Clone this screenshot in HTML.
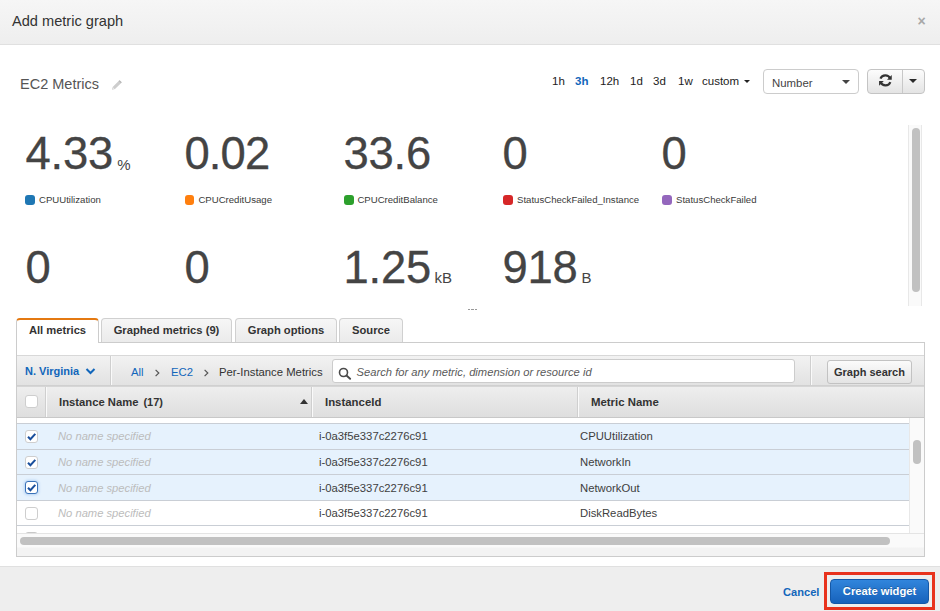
<!DOCTYPE html>
<html>
<head>
<meta charset="utf-8">
<title>Add metric graph</title>
<style>
html,body{margin:0;padding:0;}
body{width:940px;height:611px;overflow:hidden;background:#fff;font-family:"Liberation Sans",sans-serif;color:#444;position:relative;}
.abs{position:absolute;white-space:nowrap;}
#hdr{left:0;top:0;width:940px;height:44px;background:linear-gradient(#f6f6f6,#eeeeee);border-bottom:1px solid #e0e0e0;}
#title{left:12px;top:12px;font-size:14.6px;line-height:18px;color:#333;}
#close{left:917.5px;top:11.5px;font-size:14px;line-height:18px;color:#a8a8a8;font-weight:bold;}
#wtitle{left:20px;top:75px;font-size:14.5px;line-height:18px;color:#555;}
.tr{top:74px;font-size:11.5px;line-height:14px;color:#222;}
.big{font-size:45.4px;line-height:48px;color:#444;letter-spacing:-0.2px;-webkit-text-stroke:0.3px #444;}
.unit{font-size:15px;line-height:16px;color:#444;}
.sw{width:9.6px;height:9.6px;border-radius:3px;}
.lg{font-size:9.6px;line-height:12px;color:#3a3a3a;}

.tab{top:318px;height:24px;box-sizing:border-box;border:1px solid #d0d0d0;border-bottom:none;border-radius:4px 4px 0 0;background:linear-gradient(#f6f6f6,#ebebeb);font-size:11.2px;font-weight:bold;color:#333;line-height:14px;text-align:center;padding-top:4px;}
#tab1{left:16px;width:83px;height:25px;background:#fff;border-color:#ccc;border-top:2px solid #e47911;padding-top:3px;z-index:3;}
#panel{left:16px;top:342px;width:909px;height:215px;box-sizing:border-box;border:1px solid #ccc;background:#fff;}
#toolbar{left:17px;top:355px;width:907px;height:31px;background:linear-gradient(#f2f2f2,#e2e2e2);border-top:1px solid #d8d8d8;border-bottom:1px solid #d0d0d0;box-sizing:border-box;}
.vdiv{width:1px;background:#cfcfcf;border-right:1px solid #fafafa;}
.bc{top:365px;font-size:11.3px;line-height:14px;color:#333;}
.bc.l{color:#1166bb;}
#thead{left:17px;top:386px;width:907px;height:32px;background:linear-gradient(#eeeeee,#dedede);border-bottom:1px solid #c8c8c8;border-top:1px solid #d6d6d6;box-sizing:border-box;}
.th{top:395px;font-size:11.4px;font-weight:bold;line-height:14px;color:#333;}
.row{left:17px;width:892px;box-sizing:border-box;border-top:1px solid #c9ced5;}
.row.sel{background:#e6f2fd;}
.cb{left:25px;width:13px;height:13px;box-sizing:border-box;border:1px solid #cecece;border-radius:3px;background:#fff;}
.nn{left:58px;font-size:11.2px;font-style:italic;color:#bcbcbc;line-height:14px;}
.td{font-size:11.3px;color:#404040;line-height:14px;}
#footer{left:0;top:566px;width:940px;height:45px;background:#eeeeee;border-top:1px solid #e0e0e0;}
</style>
</head>
<body>
<!-- header -->
<div class="abs" id="hdr"></div>
<div class="abs" id="title">Add metric graph</div>
<div class="abs" id="close">×</div>

<!-- widget title -->
<div class="abs" id="wtitle">EC2 Metrics</div>
<svg class="abs" style="left:111px;top:79px" width="12" height="12" viewBox="0 0 12 12"><path d="M1 10.8 L1.7 7.9 L7.9 1.7 Q8.5 1.1 9.1 1.7 L10.2 2.8 Q10.8 3.4 10.2 4 L4 10.1 Z" fill="#cdcdcd"/><path d="M8.3 1.4 Q8.7 1.1 9.1 1.7 L10.2 2.8 Q10.8 3.4 10.5 3.7 L9.9 4.3 L7.7 2 Z" fill="#b8b8b8"/><path d="M2 9.9 L2.4 8.6 L3.4 9.5 Z" fill="#f2f2f2"/></svg>

<!-- time range -->
<div class="abs tr" style="left:552px">1h</div>
<div class="abs tr" style="left:575px;color:#1166bb;font-weight:bold">3h</div>
<div class="abs tr" style="left:600px">12h</div>
<div class="abs tr" style="left:630px">1d</div>
<div class="abs tr" style="left:653px">3d</div>
<div class="abs tr" style="left:678px">1w</div>
<div class="abs tr" style="left:702px">custom</div>
<div class="abs" style="left:744.3px;top:80.2px;width:0;height:0;border-left:3.2px solid transparent;border-right:3.2px solid transparent;border-top:3.1px solid #222"></div>

<!-- Number select -->
<div class="abs" style="left:763px;top:69px;width:94px;height:23px;border:1px solid #ccc;border-radius:4px;background:#fff"></div>
<div class="abs" style="left:772px;top:76px;font-size:11.4px;line-height:14px;color:#444">Number</div>
<div class="abs" style="left:842px;top:80px;width:0;height:0;border-left:4px solid transparent;border-right:4px solid transparent;border-top:4px solid #444"></div>

<!-- refresh group -->
<div class="abs" style="left:867px;top:69px;width:56px;height:23px;border:1px solid #c4c4c4;border-radius:4px;background:linear-gradient(#fcfcfc,#e4e4e4)"></div>
<div class="abs" style="left:902px;top:70px;width:1px;height:23px;background:#c8c8c8"></div>
<svg class="abs" style="left:877.6px;top:73px" width="14.8" height="14.8" viewBox="0 0 14 14"><g fill="none" stroke="#333" stroke-width="2"><path d="M11.5 5.2 A5 5 0 0 0 2.3 5.4"/><path d="M2.5 8.8 A5 5 0 0 0 11.7 8.6"/></g><path d="M13 2 L13 6.5 L8.5 6.5 Z" fill="#333"/><path d="M1 12 L1 7.5 L5.5 7.5 Z" fill="#333"/></svg>
<div class="abs" style="left:909.3px;top:78.8px;width:0;height:0;border-left:4.2px solid transparent;border-right:4.2px solid transparent;border-top:4.3px solid #2a2a2a"></div>

<!-- big numbers row 1 -->
<div class="abs big" style="left:25.5px;top:130px">4.33</div>
<div class="abs unit" style="left:117.3px;top:156.6px">%</div>
<div class="abs big" style="left:184.5px;top:130px;letter-spacing:-0.9px">0.02</div>
<div class="abs big" style="left:343.5px;top:130px">33.6</div>
<div class="abs big" style="left:502.5px;top:130px">0</div>
<div class="abs big" style="left:661.5px;top:130px">0</div>

<div class="abs sw" style="left:25.2px;top:195.2px;background:#1f77b4"></div>
<div class="abs lg" style="left:39px;top:194px">CPUUtilization</div>
<div class="abs sw" style="left:184.6px;top:195.2px;background:#ff7f0e"></div>
<div class="abs lg" style="left:198.4px;top:194px">CPUCreditUsage</div>
<div class="abs sw" style="left:344px;top:195.2px;background:#2ca02c"></div>
<div class="abs lg" style="left:357.4px;top:194px">CPUCreditBalance</div>
<div class="abs sw" style="left:503.3px;top:195.2px;background:#d62728"></div>
<div class="abs lg" style="left:517px;top:194px">StatusCheckFailed_Instance</div>
<div class="abs sw" style="left:662.4px;top:195.2px;background:#9467bd"></div>
<div class="abs lg" style="left:676px;top:194px">StatusCheckFailed</div>

<!-- big numbers row 2 -->
<div class="abs big" style="left:25.5px;top:243.5px">0</div>
<div class="abs big" style="left:184.5px;top:243.5px">0</div>
<div class="abs big" style="left:343.5px;top:243.5px">1.25</div>
<div class="abs unit" style="left:434.5px;top:269.5px">kB</div>
<div class="abs big" style="left:502.5px;top:243.5px">918</div>
<div class="abs unit" style="left:581.5px;top:269.5px">B</div>

<!-- vertical scrollbar (top) -->
<div class="abs" style="left:908px;top:125px;width:14px;height:181px;background:#fafafa;border-left:1px solid #e8e8e8;border-right:1px solid #e8e8e8;box-sizing:border-box"></div>
<div class="abs" style="left:911.6px;top:128px;width:8px;height:164px;border-radius:4px;background:#c1c1c1"></div>

<!-- resize handle -->
<div class="abs" style="left:468px;top:309px;width:2.4px;height:1px;background:#999"></div><div class="abs" style="left:471.3px;top:309px;width:2.4px;height:1px;background:#999"></div><div class="abs" style="left:474.6px;top:309px;width:2.4px;height:1px;background:#999"></div>


<!-- tabs -->
<div class="abs" id="panel"></div>
<div class="abs tab" id="tab1">All metrics</div>
<div class="abs tab" style="left:101px;width:131px">Graphed metrics (9)</div>
<div class="abs tab" style="left:235px;width:102px">Graph options</div>
<div class="abs tab" style="left:339px;width:64px">Source</div>

<!-- toolbar -->
<div class="abs" id="toolbar"></div>
<div class="abs" style="left:25px;top:364px;font-size:11px;font-weight:bold;line-height:14px;color:#1166bb">N. Virginia</div>
<svg class="abs" style="left:85px;top:367px" width="11" height="9" viewBox="0 0 11 9"><path d="M1.5 2 L5.5 6 L9.5 2" fill="none" stroke="#1166bb" stroke-width="2"/></svg>
<div class="abs vdiv" style="left:110px;top:356px;height:29px"></div>
<div class="abs bc l" style="left:131px">All</div>
<svg class="abs" style="left:155px;top:368.5px" width="5" height="8" viewBox="0 0 5 8"><path d="M0.6 0.8 L3.8 4 L0.6 7.2" fill="none" stroke="#555" stroke-width="1.2"/></svg>
<div class="abs bc l" style="left:171px">EC2</div>
<svg class="abs" style="left:203.7px;top:368.5px" width="5" height="8" viewBox="0 0 5 8"><path d="M0.6 0.8 L3.8 4 L0.6 7.2" fill="none" stroke="#555" stroke-width="1.2"/></svg>
<div class="abs bc" style="left:219px">Per-Instance Metrics</div>
<div class="abs" style="left:332px;top:359px;width:463px;height:24px;box-sizing:border-box;border:1px solid #ccc;border-radius:3px;background:#fff"></div>
<svg class="abs" style="left:338px;top:367px" width="14" height="13" viewBox="0 0 14 13"><circle cx="5.5" cy="5.5" r="4" fill="none" stroke="#4a4a4a" stroke-width="1.6"/><path d="M8.5 8.5 L12.1 11.8" stroke="#4a4a4a" stroke-width="1.9" stroke-linecap="round"/></svg>
<div class="abs" style="left:356.6px;top:365px;font-size:11.2px;font-style:italic;line-height:14px;color:#5a5a5a">Search for any metric, dimension or resource id</div>
<div class="abs vdiv" style="left:810px;top:356px;height:29px"></div>
<div class="abs" style="left:827px;top:360px;width:85px;height:24px;box-sizing:border-box;border:1px solid #c2c2c2;border-radius:3px;background:linear-gradient(#fbfbfb,#e4e4e4);font-size:11px;font-weight:bold;color:#333;line-height:14px;text-align:center;padding-top:4px">Graph search</div>

<!-- table header -->
<div class="abs" id="thead"></div>
<div class="abs cb" style="top:395px"></div>
<div class="abs vdiv" style="left:45px;top:387px;height:30px"></div>
<div class="abs th" style="left:59px;font-size:11.25px">Instance Name<span style="margin-left:5px;font-size:11px">(17)</span></div>
<div class="abs" style="left:300px;top:399px;width:0;height:0;border-left:4px solid transparent;border-right:4px solid transparent;border-bottom:5px solid #333"></div>
<div class="abs vdiv" style="left:311px;top:387px;height:30px"></div>
<div class="abs th" style="left:325px">InstanceId</div>
<div class="abs vdiv" style="left:577px;top:387px;height:30px"></div>
<div class="abs th" style="left:591px">Metric Name</div>

<!-- rows -->
<div class="abs row sel" style="top:423px;height:26px"></div>
<div class="abs row sel" style="top:449px;height:25px"></div>
<div class="abs row sel" style="top:474px;height:26px"></div>
<div class="abs row" style="top:500px;height:25px"></div>
<div class="abs row" style="top:525px;height:8px"></div>

<div class="abs cb" style="top:430px"></div>
<div class="abs cb" style="top:456px"></div>
<div class="abs cb" style="top:481px;border-color:#3a72b8;box-shadow:0 0 3px 0.5px #a4c8f2"></div>
<div class="abs cb" style="top:507px"></div>
<svg class="abs" style="left:26px;top:432px" width="11" height="10" viewBox="0 0 11 10"><path d="M2 4.7 L4.4 7.2 L9.3 1.9" fill="none" stroke="#1a4f9c" stroke-width="2"/></svg>
<svg class="abs" style="left:26px;top:458px" width="11" height="10" viewBox="0 0 11 10"><path d="M2 4.7 L4.4 7.2 L9.3 1.9" fill="none" stroke="#1a4f9c" stroke-width="2"/></svg>
<svg class="abs" style="left:26px;top:483px" width="11" height="10" viewBox="0 0 11 10"><path d="M2 4.7 L4.4 7.2 L9.3 1.9" fill="none" stroke="#1a4f9c" stroke-width="2"/></svg>

<div class="abs nn" style="top:429px">No name specified</div>
<div class="abs nn" style="top:455px">No name specified</div>
<div class="abs nn" style="top:481px">No name specified</div>
<div class="abs nn" style="top:506px">No name specified</div>

<div class="abs td" style="left:319px;top:429px">i-0a3f5e337c2276c91</div>
<div class="abs td" style="left:319px;top:455px">i-0a3f5e337c2276c91</div>
<div class="abs td" style="left:319px;top:481px">i-0a3f5e337c2276c91</div>
<div class="abs td" style="left:319px;top:506px">i-0a3f5e337c2276c91</div>

<div class="abs td" style="left:580px;top:429px">CPUUtilization</div>
<div class="abs td" style="left:580px;top:455px">NetworkIn</div>
<div class="abs td" style="left:580px;top:481px">NetworkOut</div>
<div class="abs td" style="left:580px;top:506px">DiskReadBytes</div>

<div class="abs" style="left:25px;top:526px;width:13px;height:7px;overflow:hidden"><div style="margin-top:5.5px;width:13px;height:13px;box-sizing:border-box;border:1px solid #c8c8c8;border-radius:3px;background:#fff"></div></div>
<!-- inner scrollbars -->
<div class="abs" style="left:909px;top:418px;width:15px;height:115px;background:#fafafa;border-left:1px solid #e8e8e8;box-sizing:border-box"></div>
<div class="abs" style="left:913px;top:440px;width:8px;height:24px;border-radius:4px;background:#c1c1c1"></div>
<div class="abs" style="left:17px;top:533px;width:907px;height:23px;background:linear-gradient(#fafafa 0,#fafafa 13px,#f3f3f3 14px,#f3f3f3 100%);border-top:1px solid #e4e4e4;box-sizing:border-box"></div>
<div class="abs" style="left:20px;top:537px;width:870px;height:8px;border-radius:4px;background:#c1c1c1"></div>

<!-- footer -->
<div class="abs" id="footer"></div>
<div class="abs" style="left:783px;top:584.5px;font-size:11.1px;font-weight:bold;line-height:14px;color:#1166bb">Cancel</div>
<div class="abs" style="left:830px;top:579px;width:99px;height:25px;box-sizing:border-box;border:1px solid #1558a6;border-radius:4px;background:linear-gradient(#3185dc,#1762bb);font-size:11.2px;font-weight:bold;color:#fff;line-height:14px;text-align:center;padding-top:4px;text-shadow:0 -1px 0 rgba(0,0,0,.25)">Create widget</div>
<div class="abs" style="left:824px;top:572px;width:111px;height:38px;box-sizing:border-box;border:3px solid #e8321c"></div>

</body>
</html>
